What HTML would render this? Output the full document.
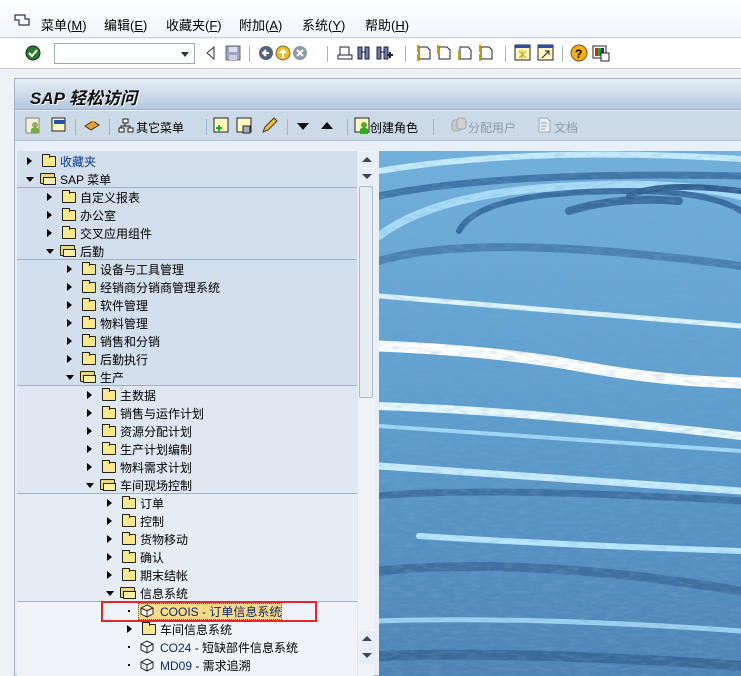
<!DOCTYPE html>
<html><head><meta charset="utf-8"><style>
*{margin:0;padding:0;box-sizing:border-box}
body{width:741px;height:676px;overflow:hidden;background:#eef2f7;font-family:"Liberation Sans","Noto Sans CJK SC",sans-serif;font-size:12px;color:#000;position:relative}
.abs{position:absolute}
#menu{left:0;top:0;width:741px;height:38px;background:linear-gradient(#fdfeff,#f1f5fa);border-bottom:1px solid #c9d3df}
#menu span{position:absolute;top:15px;font-size:13px}
#tb{left:0;top:39px;width:741px;height:30px;background:#fff;border-bottom:1px solid #c9d3df}
.sep{position:absolute;width:1px;height:16px;background:#9fb4cc}
#frame{left:14px;top:78px;width:727px;height:598px;border:1px solid #9fb2c8;border-right:none;background:#e9eff6}
#title{left:15px;top:79px;width:726px;height:31px;background:linear-gradient(#e8eff7,#b2c8de);border-bottom:1px solid #9fb2c8}
#title b{position:absolute;left:15px;top:5px;font-size:17px;font-style:italic;font-weight:bold;color:#111;text-shadow:1px 1px 0 #fff}
#atb{left:15px;top:111px;width:726px;height:30px;background:#ccdae8;border-bottom:1px solid #b3c3d4}
#atb span{position:absolute;top:8px;font-size:12px}
#tree{left:17px;top:151px;width:340px;height:525px;background:#f0f4f9;overflow:hidden}
.row{position:absolute;left:0;width:340px;height:18px}
.row .t{position:absolute;top:1px;white-space:nowrap;font-size:12px}
.arr{position:absolute;top:5px;width:0;height:0;border-top:4px solid transparent;border-bottom:4px solid transparent;border-left:5px solid #000}
.arrd{position:absolute;top:7px;width:0;height:0;border-left:4px solid transparent;border-right:4px solid transparent;border-top:5px solid #000}
.fd{position:absolute;top:4px;width:14px;height:11px;background:#f9e98c;border:1px solid #222;border-radius:1px}
.fd:before{content:"";position:absolute;left:-1px;top:-3px;width:6px;height:3px;border:1px solid #222;border-bottom:none;background:#f9e98c}
.fo{position:absolute;top:3px;width:15px;height:11px;background:#f0d870;border:1px solid #222;border-radius:1px}
.fo:after{content:"";position:absolute;left:2px;top:3px;width:11px;height:6px;background:#fbf0a8;border:1px solid #222}
.dot{position:absolute;top:8px;width:2px;height:2px;background:#000}
.line{position:absolute;left:0;width:340px;height:1px;background:#9fb2c8}
#sb{left:357px;top:151px;width:17px;height:525px;background:#f0f4f9;border-left:1px solid #dfe6ee}
.btn{position:absolute;left:1px;width:15px;height:16px;background:#e6edf5}
#img{left:379px;top:151px;width:362px;height:525px;overflow:hidden;background:#5b9bcb}
</style></head><body>
<div id="menu" class="abs">
<svg class="abs" style="left:14px;top:14px" width="16" height="12"><path d="M1 1h10v4h4v6H5V6H1z" fill="none" stroke="#335" stroke-width="1.2"/></svg>
<span style="left:41px">菜单(<u>M</u>)</span><span style="left:104px">编辑(<u>E</u>)</span><span style="left:166px">收藏夹(<u>F</u>)</span><span style="left:239px">附加(<u>A</u>)</span><span style="left:302px">系统(<u>Y</u>)</span><span style="left:365px">帮助(<u>H</u>)</span>
</div>
<div id="tb" class="abs">
<svg class="abs" style="left:25px;top:6px" width="16" height="16"><circle cx="8" cy="8" r="7" fill="#2a7a2a" stroke="#123" /><path d="M4 8l3 3 5-6" stroke="#fff" stroke-width="2" fill="none"/></svg>
<div class="abs" style="left:54px;top:4px;width:141px;height:21px;border:1px solid #9aa8b8;background:#fff"><div class="abs" style="right:5px;top:8px;border-left:4px solid transparent;border-right:4px solid transparent;border-top:5px solid #333"></div></div>
<svg class="abs" style="left:204px;top:7px" width="12" height="14"><path d="M10 1L3 7l7 6z" fill="#fff" stroke="#333"/></svg>
<svg class="abs" style="left:225px;top:6px" width="16" height="16"><rect x="1" y="1" width="14" height="14" fill="#9aa6c2" stroke="#667"/><rect x="4" y="2" width="8" height="5" fill="#dde"/><rect x="4" y="10" width="8" height="5" fill="#ccd"/></svg>
<div class="sep" style="left:249px;top:7px"></div>
<svg class="abs" style="left:258px;top:6px" width="50" height="16"><circle cx="8" cy="8" r="7" fill="#55637c"/><path d="M11 8H5m3-3L5 8l3 3" stroke="#fff" stroke-width="2" fill="none"/><circle cx="25" cy="8" r="7" fill="#f0c020" stroke="#765"/><path d="M25 13V5m-3 3l3-3 3 3" stroke="#fff" stroke-width="2" fill="none"/><circle cx="42" cy="8" r="7" fill="#9099aa"/><path d="M39 5l6 6m0-6l-6 6" stroke="#fff" stroke-width="2"/></svg>
<div class="sep" style="left:327px;top:7px"></div>
<svg class="abs" style="left:337px;top:6px" width="60" height="16"><path d="M3 2h9v8H3zM1 10h14v4H1z" fill="#fff" stroke="#223"/><path d="M21 2h4v12h-4zM28 2h4v12h-4zM24 7h5" stroke="#223" fill="#6c7ab0"/><path d="M40 2h4v12h-4zM47 2h4v12h-4zM43 7h5" stroke="#223" fill="#6c7ab0"/><path d="M50 10h6M53 7v6" stroke="#223" stroke-width="2"/></svg>
<div class="sep" style="left:405px;top:7px"></div>
<svg class="abs" style="left:415px;top:5px" width="85" height="18"><g fill="#fff" stroke="#223"><path d="M4 3h8l3 3v9H4z"/><path d="M24 3h8l3 3v9h-11z"/><path d="M45 3h8l3 3v9h-11z"/><path d="M66 3h8l3 3v9h-11z"/></g><g stroke="#c9a000" stroke-width="2"><path d="M3 1v7M3 10v7"/><path d="M23 1v9"/><path d="M44 6v10"/><path d="M65 1v7M65 10v7"/></g></svg>
<div class="sep" style="left:505px;top:7px"></div>
<svg class="abs" style="left:514px;top:5px" width="42" height="18"><rect x="1" y="1" width="15" height="15" fill="#fff8c0" stroke="#223"/><rect x="1" y="1" width="15" height="3" fill="#2a4fa8"/><path d="M5 7l7 7M12 7l-7 7M8 6v9" stroke="#c9a000"/><rect x="24" y="1" width="15" height="15" fill="#fff8c0" stroke="#223"/><rect x="24" y="1" width="15" height="3" fill="#2a4fa8"/><path d="M28 14l7-7m-4 0h4v4" stroke="#223" fill="none"/></svg>
<div class="sep" style="left:562px;top:7px"></div>
<svg class="abs" style="left:570px;top:5px" width="42" height="18"><circle cx="9" cy="9" r="8" fill="#f2b000" stroke="#654"/><text x="5" y="14" font-size="12" font-weight="bold" font-family="Liberation Sans">?</text><rect x="23" y="2" width="13" height="12" fill="#fff" stroke="#222"/><rect x="25" y="4" width="3" height="8" fill="#d22"/><rect x="28" y="4" width="3" height="8" fill="#2a2"/><rect x="31" y="4" width="3" height="8" fill="#22d"/><rect x="31" y="9" width="8" height="8" fill="#fff" stroke="#222"/></svg>
</div>
<div id="frame" class="abs"></div>
<div id="title" class="abs"><b>SAP 轻松访问</b></div>
<div id="atb" class="abs">
<svg class="abs" style="left:10px;top:6px" width="16" height="18"><rect x="1" y="1" width="13" height="15" fill="#f4f0d8" stroke="#887"/><circle cx="10" cy="8" r="3" fill="#9a6"/><path d="M6 16v-4q4-3 8 0v4" fill="#7a4"/></svg>
<svg class="abs" style="left:36px;top:6px" width="16" height="16"><rect x="1" y="1" width="13" height="13" fill="#fff8c0" stroke="#223"/><path d="M3 3h12l-2 4H3z" fill="#2a4fa8"/></svg>
<div class="sep" style="left:60px;top:8px"></div>
<svg class="abs" style="left:68px;top:5px" width="18" height="18"><path d="M2 10l8-5 6 4-8 5z" fill="#e8a030" stroke="#432"/><path d="M7 3l3 3 3-3" fill="#ee6"/></svg>
<div class="sep" style="left:94px;top:8px"></div>
<svg class="abs" style="left:103px;top:7px" width="16" height="16"><rect x="5" y="1" width="5" height="4" fill="#fff" stroke="#222"/><rect x="1" y="10" width="5" height="4" fill="#fff" stroke="#222"/><rect x="10" y="10" width="5" height="4" fill="#fff" stroke="#222"/><path d="M7 5v3H3v2M7 8h5v2" stroke="#222" fill="none"/></svg>
<span style="left:121px">其它菜单</span>
<div class="sep" style="left:191px;top:8px"></div>
<svg class="abs" style="left:198px;top:6px" width="70" height="18"><rect x="1" y="1" width="14" height="14" fill="#fff8c0" stroke="#223"/><path d="M3 11h6M6 8v6" stroke="#2a2" stroke-width="2"/><rect x="24" y="1" width="14" height="14" fill="#fff8c0" stroke="#223"/><rect x="30" y="9" width="7" height="7" fill="#aab" stroke="#223"/><path d="M50 15l2-5 9-9 3 3-9 9z" fill="#f0c040" stroke="#432"/></svg>
<div class="sep" style="left:272px;top:8px"></div>
<div class="abs" style="left:282px;top:12px;border-left:6px solid transparent;border-right:6px solid transparent;border-top:7px solid #111"></div>
<div class="abs" style="left:306px;top:11px;border-left:6px solid transparent;border-right:6px solid transparent;border-bottom:7px solid #111"></div>
<div class="sep" style="left:332px;top:8px"></div>
<svg class="abs" style="left:339px;top:6px" width="16" height="18"><rect x="1" y="1" width="14" height="14" fill="#fff8c0" stroke="#223"/><circle cx="10" cy="8" r="3" fill="#5a3"/><path d="M6 17v-5q4-3 8 0v5" fill="#3a2"/></svg>
<span style="left:355px">创建角色</span>
<div class="sep" style="left:418px;top:8px"></div>
<svg class="abs" style="left:436px;top:6px" width="16" height="16" opacity=".5"><rect x="1" y="3" width="9" height="11" rx="3" fill="#bba" stroke="#777"/><rect x="6" y="1" width="9" height="11" rx="3" fill="#ccb" stroke="#777"/></svg>
<span style="left:453px;color:#8e9aa8">分配用户</span>
<svg class="abs" style="left:522px;top:6px" width="16" height="16" opacity=".5"><path d="M2 1h8l3 3v11H2z" fill="#fff" stroke="#777"/><path d="M4 6h6M4 9h6M4 12h4" stroke="#777"/></svg>
<span style="left:539px;color:#8e9aa8">文档</span>
</div>
<div id="tree" class="abs">
<div class="abs" style="left:0;top:0;width:340px;height:235px;background:#d3dfec"></div>
<div class="abs" style="left:0;top:235px;width:340px;height:108px;background:#dee7f2"></div>
<div class="abs" style="left:0;top:343px;width:340px;height:108px;background:#e7edf5"></div>
<div class="line" style="top:36px"></div><div class="line" style="top:108px"></div><div class="line" style="top:234px"></div><div class="line" style="top:342px"></div><div class="line" style="top:450px"></div>
<div class="row" style="top:1px"><i class="arr" style="left:10px"></i><i class="fd" style="left:25px"></i><span class="t" style="left:43px;color:#0a3a8a">收藏夹</span></div>
<div class="row" style="top:19px"><i class="arrd" style="left:9px"></i><i class="fo" style="left:23px"></i><span class="t" style="left:43px">SAP 菜单</span></div>
<div class="row" style="top:37px"><i class="arr" style="left:30px"></i><i class="fd" style="left:45px"></i><span class="t" style="left:63px">自定义报表</span></div>
<div class="row" style="top:55px"><i class="arr" style="left:30px"></i><i class="fd" style="left:45px"></i><span class="t" style="left:63px">办公室</span></div>
<div class="row" style="top:73px"><i class="arr" style="left:30px"></i><i class="fd" style="left:45px"></i><span class="t" style="left:63px">交叉应用组件</span></div>
<div class="row" style="top:91px"><i class="arrd" style="left:29px"></i><i class="fo" style="left:43px"></i><span class="t" style="left:63px">后勤</span></div>
<div class="row" style="top:109px"><i class="arr" style="left:50px"></i><i class="fd" style="left:65px"></i><span class="t" style="left:83px">设备与工具管理</span></div>
<div class="row" style="top:127px"><i class="arr" style="left:50px"></i><i class="fd" style="left:65px"></i><span class="t" style="left:83px">经销商分销商管理系统</span></div>
<div class="row" style="top:145px"><i class="arr" style="left:50px"></i><i class="fd" style="left:65px"></i><span class="t" style="left:83px">软件管理</span></div>
<div class="row" style="top:163px"><i class="arr" style="left:50px"></i><i class="fd" style="left:65px"></i><span class="t" style="left:83px">物料管理</span></div>
<div class="row" style="top:181px"><i class="arr" style="left:50px"></i><i class="fd" style="left:65px"></i><span class="t" style="left:83px">销售和分销</span></div>
<div class="row" style="top:199px"><i class="arr" style="left:50px"></i><i class="fd" style="left:65px"></i><span class="t" style="left:83px">后勤执行</span></div>
<div class="row" style="top:217px"><i class="arrd" style="left:49px"></i><i class="fo" style="left:63px"></i><span class="t" style="left:83px">生产</span></div>
<div class="row" style="top:235px"><i class="arr" style="left:70px"></i><i class="fd" style="left:85px"></i><span class="t" style="left:103px">主数据</span></div>
<div class="row" style="top:253px"><i class="arr" style="left:70px"></i><i class="fd" style="left:85px"></i><span class="t" style="left:103px">销售与运作计划</span></div>
<div class="row" style="top:271px"><i class="arr" style="left:70px"></i><i class="fd" style="left:85px"></i><span class="t" style="left:103px">资源分配计划</span></div>
<div class="row" style="top:289px"><i class="arr" style="left:70px"></i><i class="fd" style="left:85px"></i><span class="t" style="left:103px">生产计划编制</span></div>
<div class="row" style="top:307px"><i class="arr" style="left:70px"></i><i class="fd" style="left:85px"></i><span class="t" style="left:103px">物料需求计划</span></div>
<div class="row" style="top:325px"><i class="arrd" style="left:69px"></i><i class="fo" style="left:83px"></i><span class="t" style="left:103px">车间现场控制</span></div>
<div class="row" style="top:343px"><i class="arr" style="left:90px"></i><i class="fd" style="left:105px"></i><span class="t" style="left:123px">订单</span></div>
<div class="row" style="top:361px"><i class="arr" style="left:90px"></i><i class="fd" style="left:105px"></i><span class="t" style="left:123px">控制</span></div>
<div class="row" style="top:379px"><i class="arr" style="left:90px"></i><i class="fd" style="left:105px"></i><span class="t" style="left:123px">货物移动</span></div>
<div class="row" style="top:397px"><i class="arr" style="left:90px"></i><i class="fd" style="left:105px"></i><span class="t" style="left:123px">确认</span></div>
<div class="row" style="top:415px"><i class="arr" style="left:90px"></i><i class="fd" style="left:105px"></i><span class="t" style="left:123px">期末结帐</span></div>
<div class="row" style="top:433px"><i class="arrd" style="left:89px"></i><i class="fo" style="left:103px"></i><span class="t" style="left:123px">信息系统</span></div>
<div class="row" style="top:451px"><i class="dot" style="left:111px"></i><div class="abs" style="left:121px;top:1px;width:144px;height:17px;background:#fbd98a;border:1px dotted #555"></div><svg class="abs" style="left:123px;top:2px" width="15" height="14"><path d="M7 1l6 3v6l-6 3-6-3V4zM1 4l6 3 6-3M7 7v6" fill="#fff" stroke="#222"/></svg><span class="t" style="left:143px;color:#0a2a6a">COOIS - 订单信息系统</span></div>
<div class="row" style="top:469px"><i class="arr" style="left:110px"></i><i class="fd" style="left:125px"></i><span class="t" style="left:143px">车间信息系统</span></div>
<div class="row" style="top:487px"><i class="dot" style="left:111px"></i><svg class="abs" style="left:123px;top:2px" width="15" height="14"><path d="M7 1l6 3v6l-6 3-6-3V4zM1 4l6 3 6-3M7 7v6" fill="#fff" stroke="#222"/></svg><span class="t" style="left:143px"><span style="color:#0a2a6a">CO24</span> - 短缺部件信息系统</span></div>
<div class="row" style="top:505px"><i class="dot" style="left:111px"></i><svg class="abs" style="left:123px;top:2px" width="15" height="14"><path d="M7 1l6 3v6l-6 3-6-3V4zM1 4l6 3 6-3M7 7v6" fill="#fff" stroke="#222"/></svg><span class="t" style="left:143px"><span style="color:#0a2a6a">MD09</span> - 需求追溯</span></div>
</div>
<div class="abs" style="left:101px;top:601px;width:216px;height:21px;border:2px solid #e8262a"></div>
<div id="sb" class="abs">
<div class="btn" style="top:1px"><i class="abs" style="left:3px;top:5px;border-left:5px solid transparent;border-right:5px solid transparent;border-bottom:5px solid #445"></i></div>
<div class="btn" style="top:18px"><i class="abs" style="left:3px;top:5px;border-left:5px solid transparent;border-right:5px solid transparent;border-top:5px solid #445"></i></div>
<div class="abs" style="left:1px;top:35px;width:14px;height:212px;background:#e7edf4;border:1px solid #aab8c8;border-radius:2px"></div>
<div class="btn" style="top:480px"><i class="abs" style="left:3px;top:5px;border-left:5px solid transparent;border-right:5px solid transparent;border-bottom:5px solid #445"></i></div>
<div class="btn" style="top:497px"><i class="abs" style="left:3px;top:5px;border-left:5px solid transparent;border-right:5px solid transparent;border-top:5px solid #445"></i></div>
</div>
<div id="img" class="abs">
<svg width="362" height="525">
<defs><linearGradient id="g" x1="0" y1="0" x2="0" y2="1"><stop offset="0" stop-color="#72b0dc"/><stop offset=".5" stop-color="#5e9dcd"/><stop offset="1" stop-color="#4d84b5"/></linearGradient>
<filter id="n"><feTurbulence type="fractalNoise" baseFrequency="0.08 0.3" numOctaves="2" seed="3"/><feColorMatrix values="0 0 0 0 0.2  0 0 0 0 0.4  0 0 0 0 0.6  0 0 0 1.2 -0.5"/></filter></defs>
<rect width="362" height="525" fill="url(#g)"/>
<g fill="none" stroke-linecap="round">
<path d="M0 20Q150 -5 362 8" stroke="#c6ecff" stroke-width="6"/>
<path d="M0 45Q120 20 362 25" stroke="#3f75a8" stroke-width="7"/>
<path d="M0 85Q60 40 200 35Q300 30 362 45" stroke="#a8dcf8" stroke-width="8"/>
<path d="M80 80Q100 40 250 40Q330 40 362 60" stroke="#3a6ea0" stroke-width="6"/>
<path d="M190 60Q240 45 300 50" stroke="#3a6ea0" stroke-width="8"/>
<path d="M250 45Q280 30 362 40" stroke="#2f6090" stroke-width="6"/>
<path d="M0 110Q100 80 362 115" stroke="#4a80b2" stroke-width="8"/>
<path d="M0 145Q180 160 362 175" stroke="#dff5ff" stroke-width="5"/>
<path d="M0 195Q120 200 200 215Q280 230 362 232" stroke="#ffffff" stroke-width="11"/>
<path d="M0 255Q150 260 362 285" stroke="#e8f8ff" stroke-width="8"/>
<path d="M0 275Q150 285 362 300" stroke="#a0d8f8" stroke-width="4"/>
<path d="M0 315Q150 325 362 340" stroke="#c8ecff" stroke-width="7"/>
<path d="M0 345Q100 335 362 350" stroke="#3f72a4" stroke-width="7"/>
<path d="M40 385Q200 395 362 400" stroke="#b8e6ff" stroke-width="6"/>
<path d="M0 420Q150 405 362 440" stroke="#4070a0" stroke-width="9"/>
<path d="M0 470Q150 465 362 480" stroke="#9cd2f0" stroke-width="5"/>
<path d="M0 505Q150 500 362 515" stroke="#3a6a98" stroke-width="10"/>
</g>
<rect width="362" height="525" filter="url(#n)" opacity=".6"/>
</svg>
</div>
</body></html>
